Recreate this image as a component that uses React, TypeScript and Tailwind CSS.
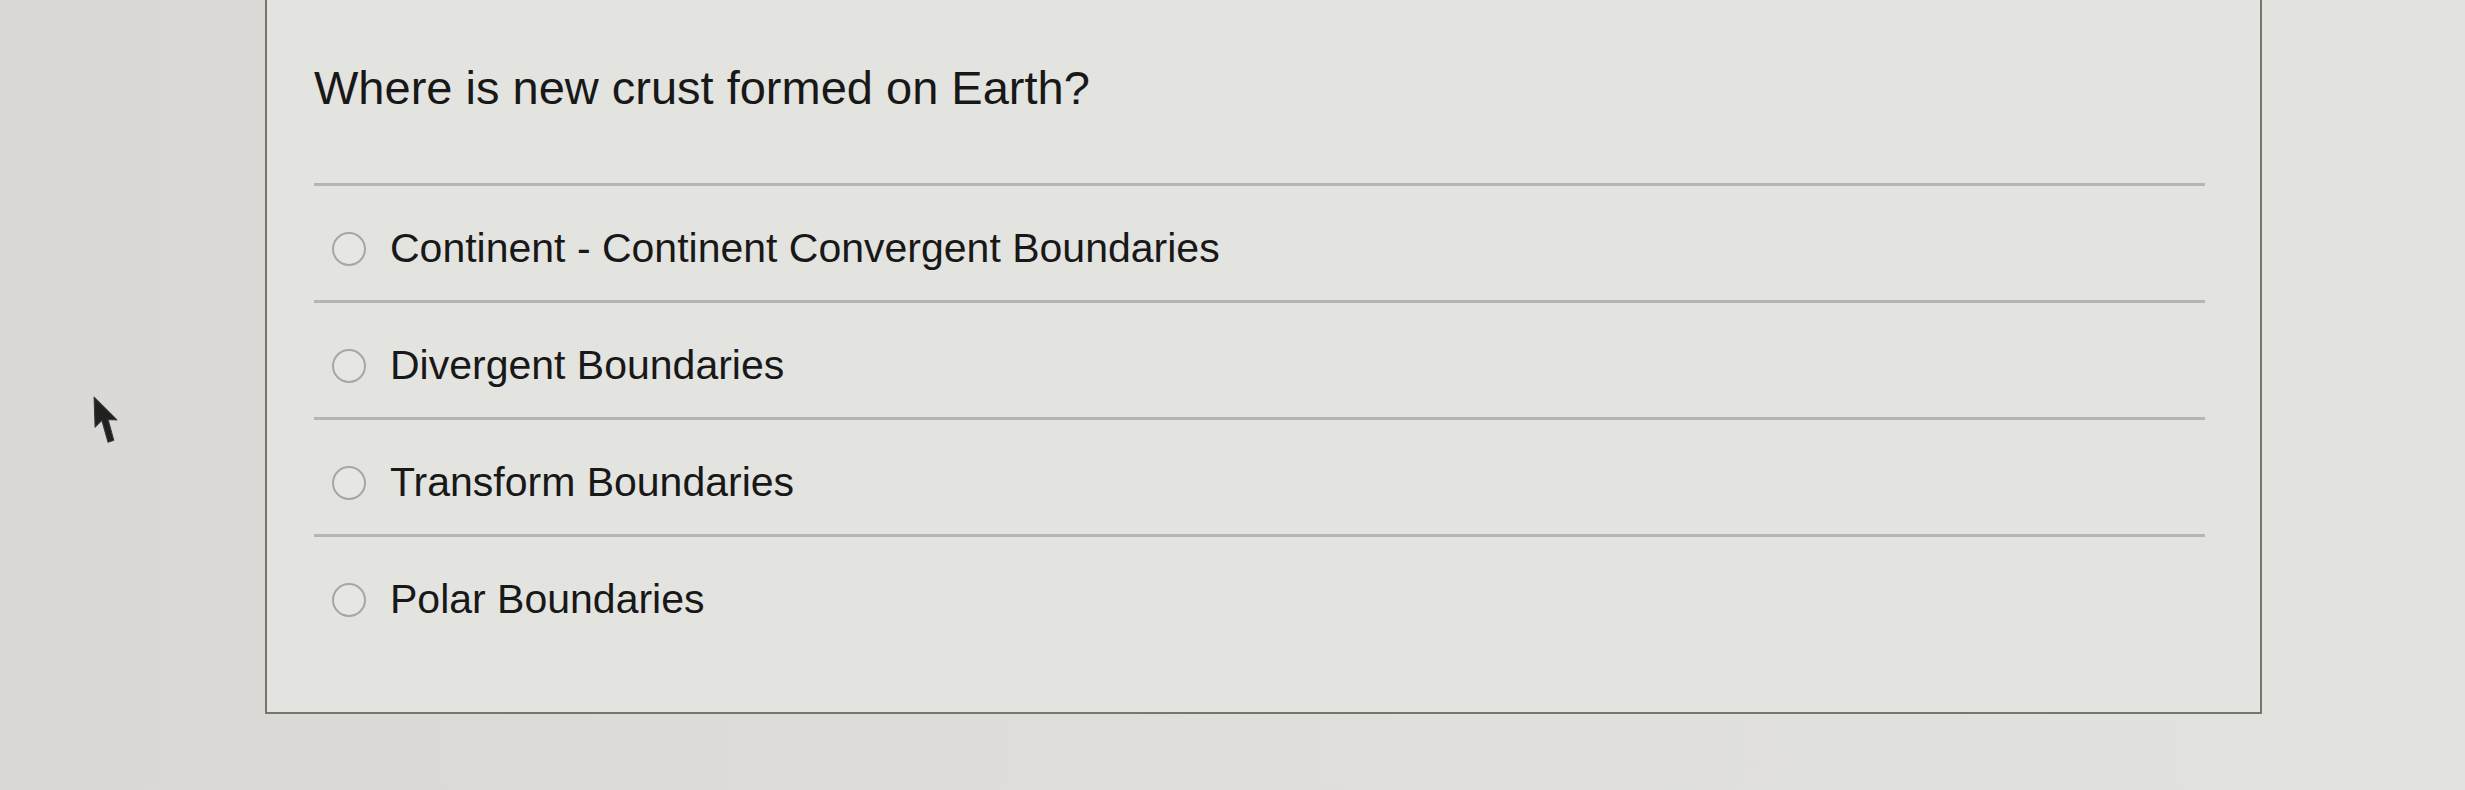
import React from "react";

const options = [
  "Continent - Continent Convergent Boundaries",
  "Divergent Boundaries",
  "Transform Boundaries",
  "Polar Boundaries",
];

function Cursor() {
  return (
    <svg
      className="absolute left-[93px] top-[396px] blur-[0.6px]"
      width="27"
      height="50"
      viewBox="0 0 26 48"
    >
      <path
        d="M1 1 L2 30 L8.5 23.5 L14.5 44.5 L20 42.5 L14.5 22.5 L23 23 Z"
        fill="#202020"
        stroke="#383838"
        strokeWidth="1"
        strokeLinejoin="round"
      />
    </svg>
  );
}

export default function App() {
  return (
    <div
      className="relative w-[2465px] h-[790px] overflow-hidden bg-linear-to-r from-[#d9d8d4] via-[#dfdedb] to-[#e2e2df]"
      style={{ fontFamily: '"Liberation Sans", Arial, Helvetica, sans-serif' }}
    >
      <div className="ml-[265px] w-[1997px] border-x-2 border-b-2 border-[#78746f] bg-[#e3e3e0] pl-[47px] pr-[55px] pt-[64px] pb-[61px]">
        <div className="text-[47px] leading-none text-[#181818]">
          Where is new crust formed on Earth?
        </div>
        <div className="mt-[72px] flex flex-col">
          {options.map((o) => (
            <div
              key={o}
              className="border-t-[3px] border-[#b5b5b2] pt-[42px] pb-[31px]"
            >
              <div className="flex items-center">
                <div className="ml-[18px] w-[34px] h-[34px] rounded-full border-2 border-[#a6a6a3] bg-[#e6e6e3] shrink-0" />
                <span className="ml-[24px] text-[41px] leading-none text-[#181818]">
                  {o}
                </span>
              </div>
            </div>
          ))}
        </div>
      </div>
      <Cursor />
    </div>
  );
}
